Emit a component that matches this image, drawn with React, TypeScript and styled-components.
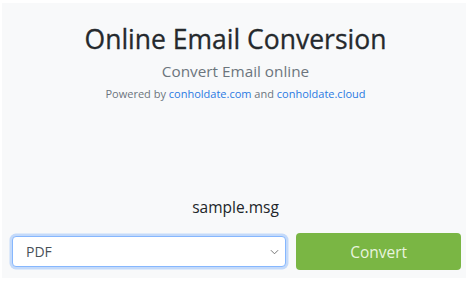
import React, { useState } from 'react';
import styled, { createGlobalStyle } from 'styled-components';

const GlobalStyle = createGlobalStyle`
  html, body {
    margin: 0;
    padding: 0;
    background: #ffffff;
    font-family: "Open Sans", "Noto Sans", "Liberation Sans", sans-serif;
  }
`;

const App: React.FC = () => {
  const [format, setFormat] = useState('PDF');
  return (
    <>
      <GlobalStyle />
      <Page>
        <Panel>
          <Title>Online Email Conversion</Title>
          <Subtitle>Convert Email online</Subtitle>
          <Powered>
            Powered by <Link href="#">conholdate.com</Link> and <Link href="#">conholdate.cloud</Link>
          </Powered>
          <FileName>sample.msg</FileName>
          <Controls>
            <SelectWrap>
              <Select value={format} onChange={e => setFormat(e.target.value)}>
                <option>PDF</option>
                <option>DOCX</option>
                <option>HTML</option>
              </Select>
              <Chevron viewBox="0 0 10 6">
                <path d="M1 1l4 4 4-4" fill="none" stroke="#666" strokeWidth="1" />
              </Chevron>
            </SelectWrap>
            <ConvertButton>Convert</ConvertButton>
          </Controls>
        </Panel>
      </Page>
    </>
  );
};

const Page = styled.div`
  padding: 3px 8px 4px 2px;
  width: 474px;
  box-sizing: border-box;
`;

const Panel = styled.div`
  background: #f8f9fa;
  height: 275px;
  box-sizing: border-box;
  padding: 18px 5px 0 8px;
  display: flex;
  flex-direction: column;
  align-items: center;
`;

const Title = styled.h1`
  margin: 0;
  font-size: 26.5px;
  font-weight: 400;
  color: #25292d;
  line-height: 36px;
  -webkit-text-stroke: 0.3px #25292d;
`;

const Subtitle = styled.div`
  margin-top: 3px;
  font-size: 15.3px;
  color: #6c757d;
  line-height: 22px;
`;

const Powered = styled.div`
  margin-top: 3px;
  font-size: 11px;
  color: #6c757d;
  line-height: 18px;
`;

const Link = styled.a`
  color: #2a7ae2;
  text-decoration: none;
`;

const FileName = styled.div`
  margin-top: 93px;
  font-size: 15.5px;
  color: #212529;
  line-height: 22px;
`;

const Controls = styled.div`
  margin-top: 15px;
  width: 100%;
  display: flex;
  align-items: center;
  gap: 10px;
  padding-left: 2px;
  box-sizing: border-box;
`;

const SelectWrap = styled.div`
  position: relative;
  width: 275px;
`;

const Select = styled.select`
  appearance: none;
  display: block;
  width: 100%;
  height: 31px;
  box-sizing: border-box;
  border: 1px solid #86b7fe;
  border-radius: 4px;
  box-shadow: 0 0 0 2.5px rgba(100, 160, 250, 0.35);
  background: #ffffff;
  padding: 0 13px;
  font-family: inherit;
  font-size: 14px;
  color: #495057;
  outline: none;
`;

const Chevron = styled.svg`
  position: absolute;
  right: 7px;
  top: 13px;
  width: 9px;
  height: 6px;
  pointer-events: none;
`;

const ConvertButton = styled.button`
  width: 165px;
  height: 37px;
  border: none;
  border-radius: 4px;
  background: #7ab644;
  color: #e8f4de;
  font-family: inherit;
  font-size: 15.5px;
  cursor: pointer;
`;

export default App;
